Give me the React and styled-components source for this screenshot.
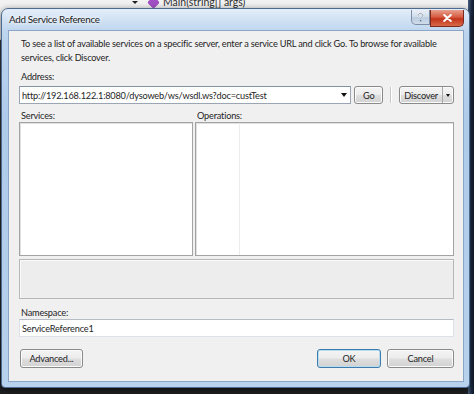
import React from "react";
import styled, { createGlobalStyle } from "styled-components";

const GlobalStyle = createGlobalStyle`
  html, body {
    margin: 0;
    padding: 0;
    background: #2e3034;
  }
  * {
    box-sizing: border-box;
  }
`;

const Desktop = styled.div`
  position: relative;
  width: 474px;
  height: 394px;
  overflow: hidden;
  background: linear-gradient(180deg, #3b3d41 0%, #1f2022 100%);
  font-family: Lato, "Open Sans", sans-serif;
`;

// editor behind the dialog, only its top edge peeks out
const Editor = styled.div`
  position: absolute;
  left: 0;
  top: 0;
  width: 468px;
  height: 40px;
  background: #f2f2f2;
  border-bottom: 1px solid #cfcfcf;
`;

const EditorCrumb = styled.div`
  position: absolute;
  left: 132px;
  top: -4px;
  display: flex;
  align-items: center;
  gap: 5px;
  font-size: 10.5px;
  color: #333;
  &::before {
    content: "";
    width: 0;
    height: 0;
    border-left: 3px solid transparent;
    border-right: 3px solid transparent;
    border-top: 3px solid #222;
    margin-right: 6px;
  }
`;

const MethodIcon = styled.span`
  width: 9px;
  height: 9px;
  background: #a251c4;
  transform: rotate(45deg);
  border-radius: 2px;
`;

const SidePane = styled.div`
  position: absolute;
  right: 0;
  top: 0;
  width: 6px;
  height: 394px;
  background: linear-gradient(90deg, #45607f 0%, #1b2840 60%, #111a2a 100%);
`;

const Window = styled.div`
  position: absolute;
  left: 1px;
  top: 8px;
  width: 469px;
  height: 380px;
  display: flex;
  flex-direction: column;
  padding: 0 5px 5px 6px;
  border: 1px solid #4d6a8f;
  border-radius: 7px 7px 4px 4px;
  background: linear-gradient(
    180deg,
    #e4eef9 0px,
    #cfe0f3 12px,
    #bcd4ee 24px,
    #aecbea 120px,
    #b8d1ec 100%
  );
  box-shadow: 0 2px 7px rgba(0, 0, 0, 0.6);
`;

const TitleBar = styled.div`
  height: 21px;
  display: flex;
  align-items: flex-start;
`;

const Title = styled.div`
  padding: 4px 0 0 1px;
  font-size: 9.8px;
  letter-spacing: -0.3px;
  color: #1b1b1b;
  text-shadow: 0 0 6px #fff, 0 0 3px #fff;
`;

const CaptionButtons = styled.div`
  margin-left: auto;
  display: flex;
  margin-top: 1px;
`;

const CaptionButton = styled.div`
  height: ${(p) => (p.$close ? 17 : 15)}px;
  width: ${(p) => (p.$close ? 34 : 19)}px;
  display: flex;
  align-items: center;
  justify-content: center;
  border: 1px solid ${(p) => (p.$close ? "#7d2a1c" : "#7d8fa6")};
  border-top: none;
  border-radius: ${(p) => (p.$close ? "0 0 5px 0" : "0 0 0 5px")};
  background: ${(p) =>
    p.$close
      ? "linear-gradient(180deg, #e8a08f 0%, #d65a3f 45%, #c2341b 55%, #d86a48 100%)"
      : "linear-gradient(180deg, #e9eff7 0%, #d3dfec 45%, #bccde1 55%, #cfdcea 100%)"};
`;

const Client = styled.div`
  flex: 1;
  display: flex;
  flex-direction: column;
  background: #f0f0f0;
  border: 1px solid #8aa5c5;
  padding: 6px 9px 0 10px;
  font-size: 9.2px;
  letter-spacing: -0.2px;
  color: #1e1e1e;
`;

const Description = styled.p`
  margin: 0;
  line-height: 14px;
  padding-left: 2px;
`;

const Label = styled.div`
  line-height: 13px;
  padding-left: 2px;
  margin-top: ${(p) => p.$top || 0}px;
`;

const AddressRow = styled.div`
  display: flex;
  align-items: stretch;
  height: 18px;
  margin-top: 3px;
`;

const Combo = styled.div`
  width: 334px;
  display: flex;
  align-items: center;
  background: #fff;
  border: 1px solid #9aa6b5;
  border-top-color: #8592a3;
  padding: 0 0 0 2px;
`;

const ComboText = styled.span`
  flex: 1;
  white-space: nowrap;
  overflow: hidden;
`;

const Caret = styled.span`
  width: 12px;
  display: flex;
  justify-content: center;
  &::after {
    content: "";
    border-left: 3px solid transparent;
    border-right: 3px solid transparent;
    border-top: 4px solid #111;
  }
`;

const Button = styled.div`
  width: ${(p) => p.$w}px;
  height: ${(p) => p.$h || 19}px;
  display: flex;
  align-items: center;
  justify-content: center;
  border: 1px solid ${(p) => (p.$focused ? "#3d7bad" : "#8a8a8a")};
  border-radius: 3px;
  background: linear-gradient(
    180deg,
    #f4f4f4 0%,
    #ececec 48%,
    #dedede 52%,
    #d2d2d2 100%
  );
  box-shadow: inset 0 0 0 1px ${(p) => (p.$focused ? "#b8dcf2" : "#fbfbfb")};
  margin-left: ${(p) => p.$ml || 0}px;
`;

const Separator = styled.div`
  width: 2px;
  margin: 1px 7px;
  background: #c8c8c8;
  border-right: 1px solid #fff;
`;

const SplitButton = styled.div`
  display: flex;
  width: 55px;
  height: 18px;
  border: 1px solid #8a8a8a;
  border-radius: 3px;
  overflow: hidden;
  background: linear-gradient(
    180deg,
    #f4f4f4 0%,
    #ececec 48%,
    #dedede 52%,
    #d2d2d2 100%
  );
  box-shadow: inset 0 0 0 1px #fbfbfb;
`;

const SplitMain = styled.div`
  flex: 1;
  display: flex;
  align-items: center;
  justify-content: center;
  border-right: 1px solid #a8a8a8;
`;

const SplitArrow = styled(Caret)`
  width: 10px;
  align-items: center;
  &::after {
    border-left-width: 2.5px;
    border-right-width: 2.5px;
    border-top-width: 3px;
  }
`;

const ListLabels = styled.div`
  display: grid;
  grid-template-columns: 176px 1fr;
  line-height: 13px;
  margin-top: 5px;
  padding-left: 2px;
`;

const Lists = styled.div`
  display: grid;
  grid-template-columns: 174px 1fr;
  gap: 2px;
  height: 134px;
`;

const ListBox = styled.div`
  background: #fff;
  border: 1px solid #a3a3a3;
  box-shadow: inset 1px 1px 0 #e0e0e0;
  display: grid;
  grid-template-columns: ${(p) => (p.$split ? "44px 1fr" : "1fr")};
`;

const Pane = styled.div`
  border-right: ${(p) => (p.$divider ? "1px solid #ececec" : "none")};
`;

const StatusBox = styled.div`
  height: 40px;
  margin-top: 3px;
  background: #ededed;
  border: 1px solid #b7b7b7;
  box-shadow: inset 1px 1px 0 #fafafa;
`;

const TextInput = styled.div`
  height: 18px;
  display: flex;
  align-items: center;
  background: #fff;
  border: 1px solid #dde2e8;
  border-top-color: #b5bcc6;
  padding-left: 2px;
`;

const Footer = styled.div`
  display: flex;
  align-items: center;
  margin-top: 12px;
  padding-left: 1px;
`;

const Spacer = styled.div`
  flex: 1;
`;

export default function App() {
  return (
    <>
      <GlobalStyle />
      <Desktop>
        <Editor>
          <EditorCrumb>
            <MethodIcon />
            <span>Main(string[] args)</span>
          </EditorCrumb>
        </Editor>
        <SidePane />
        <Window>
          <TitleBar>
            <Title>Add Service Reference</Title>
            <CaptionButtons>
              <CaptionButton>
                <svg width="7" height="9" viewBox="0 0 7 9">
                  <path
                    d="M1 2.6 C1 1.2 2 0.6 3.4 0.6 C4.9 0.6 5.9 1.4 5.9 2.5 C5.9 3.8 3.6 4.2 3.6 5.9"
                    fill="none"
                    stroke="#fff"
                    strokeWidth="1.4"
                  />
                  <path
                    d="M1 2.6 C1 1.2 2 0.6 3.4 0.6 C4.9 0.6 5.9 1.4 5.9 2.5 C5.9 3.8 3.6 4.2 3.6 5.9"
                    fill="none"
                    stroke="#5b6f88"
                    strokeWidth="0.7"
                  />
                  <rect x="2.9" y="7" width="1.4" height="1.4" fill="#5b6f88" />
                </svg>
              </CaptionButton>
              <CaptionButton $close>
                <svg width="9" height="8" viewBox="0 0 9 8">
                  <path
                    d="M1.2 1 L7.8 7 M7.8 1 L1.2 7"
                    stroke="#fff"
                    strokeWidth="2"
                    strokeLinecap="round"
                  />
                </svg>
              </CaptionButton>
            </CaptionButtons>
          </TitleBar>
          <Client>
            <Description>
              To see a list of available services on a specific server, enter
              a service URL and click Go. To browse for available services,
              click Discover.
            </Description>
            <Label $top={5}>Address:</Label>
            <AddressRow>
              <Combo>
                <ComboText>
                  http://192.168.122.1:8080/dysoweb/ws/wsdl.ws?doc=custTest
                </ComboText>
                <Caret />
              </Combo>
              <Button $w={29} $h={18} $ml={3}>
                Go
              </Button>
              <Separator />
              <SplitButton>
                <SplitMain>Discover</SplitMain>
                <SplitArrow />
              </SplitButton>
            </AddressRow>
            <ListLabels>
              <span>Services:</span>
              <span>Operations:</span>
            </ListLabels>
            <Lists>
              <ListBox />
              <ListBox $split>
                <Pane $divider />
                <Pane />
              </ListBox>
            </Lists>
            <StatusBox />
            <Label $top={7}>Namespace:</Label>
            <TextInput>ServiceReference1</TextInput>
            <Footer>
              <Button $w={63}>Advanced...</Button>
              <Spacer />
              <Button $w={64} $focused>
                OK
              </Button>
              <Button $w={67} $ml={6}>
                Cancel
              </Button>
            </Footer>
          </Client>
        </Window>
      </Desktop>
    </>
  );
}
